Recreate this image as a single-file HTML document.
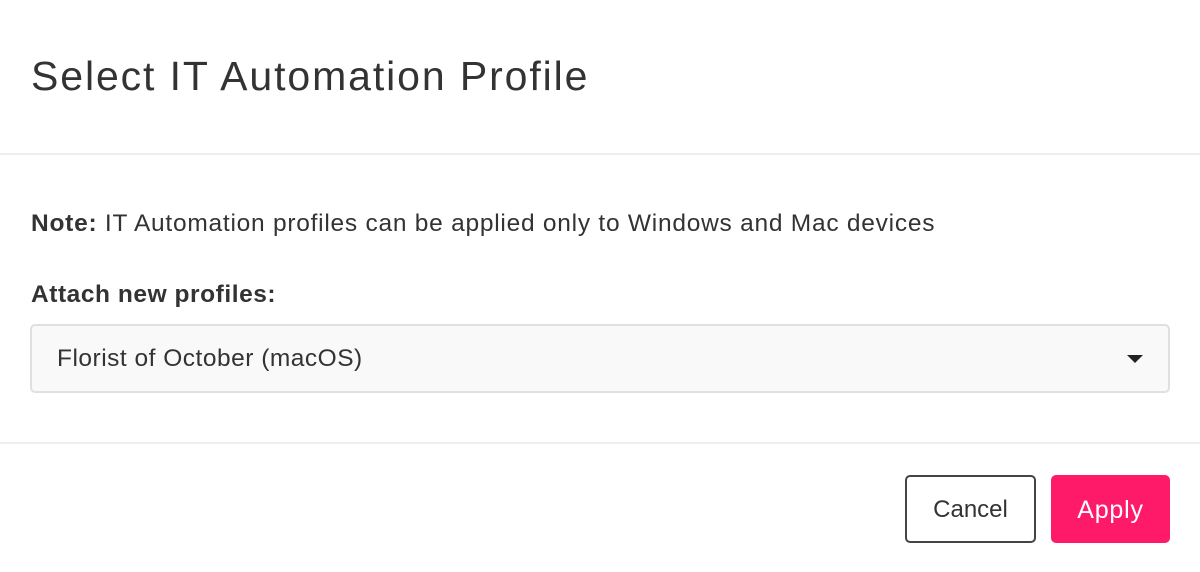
<!DOCTYPE html>
<html><head><style>
body{margin:0;width:1200px;height:572px;background:#fff;font-family:"Liberation Sans",sans-serif;color:#2b2b2b;position:relative;overflow:hidden}
.a{position:absolute;white-space:nowrap}
.hr{position:absolute;left:0;width:1200px;height:2px;background:#eeeeee}
</style></head><body>
<div class="a" style="left:31px;top:51px;font-size:41px;line-height:50px;color:#333;letter-spacing:1.9px">Select IT Automation Profile</div>
<div class="hr" style="top:153px"></div>
<div class="a" style="left:31px;top:209px;font-size:24.5px;line-height:30px;color:#333;letter-spacing:0.75px"><b>Note:</b> IT Automation profiles can be applied only to Windows and Mac devices</div>
<div class="a" style="left:31px;top:280px;font-size:24.5px;line-height:30px;font-weight:bold;color:#333;letter-spacing:0.55px">Attach new profiles:</div>
<div class="a" style="left:30px;top:324px;width:1136px;height:65px;border:2px solid #e0e0e0;border-radius:5px;background:#f9f9f9"></div>
<div class="a" style="left:57px;top:344px;font-size:24.5px;line-height:30px;color:#333;letter-spacing:0.5px">Florist of October (macOS)</div>
<div class="a" style="left:1127px;top:355px;width:0;height:0;border-left:8px solid transparent;border-right:8px solid transparent;border-top:8px solid #222"></div>
<div class="hr" style="top:442px"></div>
<div class="a" style="left:905px;top:475px;width:127px;height:64px;border:2px solid #444;border-radius:5px;text-align:center;line-height:66px;font-size:24px;color:#333">Cancel</div>
<div class="a" style="left:1051px;top:475px;width:119px;height:68px;background:#ff1a69;border-radius:5px;text-align:center;line-height:70px;font-size:25px;color:#fff;letter-spacing:0.8px">Apply</div>
</body></html>
